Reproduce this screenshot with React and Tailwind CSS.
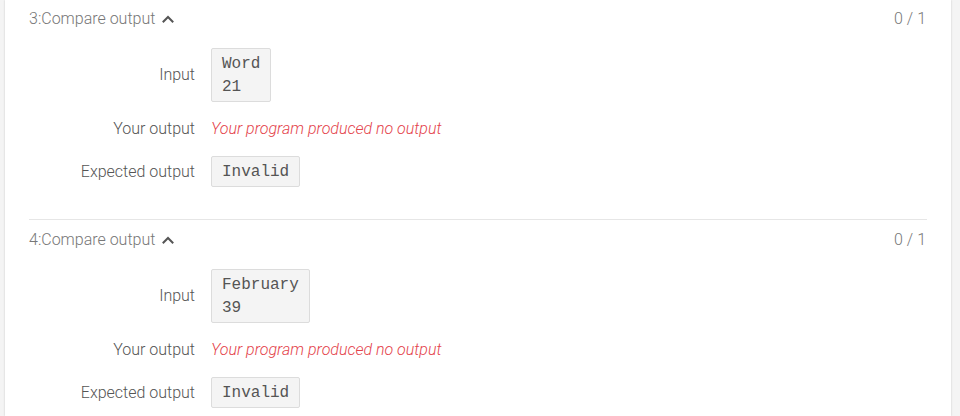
import React from "react";

const Chevron = () => (
  <svg width="14" height="14" viewBox="0 0 14 14" className="ml-[6px]" aria-hidden="true">
    <polyline points="2.5,9.5 7,5 11.5,9.5" fill="none" stroke="#555" strokeWidth="2" strokeLinecap="square" />
  </svg>
);

const Label = ({ children }) => (
  <div className="w-[182px] shrink-0 pr-[16px] text-right text-[16px] leading-[22px] text-[#555]">{children}</div>
);

const CodeBox = ({ lines }) => (
  <div className="rounded-[2px] border border-[#dcdcdc] bg-[#f4f4f4] px-[10px] pt-[4px] pb-[2px] font-['Liberation_Mono','Courier_New',monospace] text-[16px] leading-[23px] text-[#555]">
    {lines.map((l, i) => (
      <div key={i}>{l}</div>
    ))}
  </div>
);

const Section = ({ num, input, expected, first, last }) => (
  <div className={`${first ? "pt-[8px]" : "pt-[9px]"} ${last ? "pb-[10px]" : "pb-[32px] border-b border-[#e6e6e6]"}`}>
    <div className="flex h-[22px] items-center justify-between text-[16px] leading-[22px]">
      <div className="flex items-center text-[#777]">
        <span>{num}:Compare output</span>
        <Chevron />
      </div>
      <span className="pr-[1px] text-[#777]">0 / 1</span>
    </div>
    <div className="mt-[18px] flex items-center">
      <Label>Input</Label>
      <CodeBox lines={input} />
    </div>
    <div className="mt-[16px] flex items-center">
      <Label>Your output</Label>
      <span className="text-[16px] italic leading-[22px] text-[#e4434b]">Your program produced no output</span>
    </div>
    <div className="mt-[16px] flex items-center">
      <Label>Expected output</Label>
      <CodeBox lines={expected} />
    </div>
  </div>
);

export default function App() {
  return (
    <div className="h-[416px] w-[960px] overflow-hidden bg-[#f4f4f4] font-['Roboto','Liberation_Sans',sans-serif] font-light">
      <div className="ml-[5px] h-full w-[946px] bg-white px-[24px] shadow-[0_0_2px_rgba(0,0,0,0.18)]">
        <Section num={3} input={["Word", "21"]} expected={["Invalid"]} first />
        <Section num={4} input={["February", "39"]} expected={["Invalid"]} last />
      </div>
    </div>
  );
}
